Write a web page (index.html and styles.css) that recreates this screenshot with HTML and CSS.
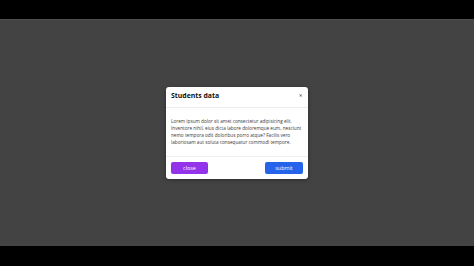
FILE: index.html
```html
<!DOCTYPE html>
<html lang="en">
<head>
<meta charset="utf-8">
<title>Students data</title>
<link rel="stylesheet" href="styles.css">
</head>
<body>
<div class="screen">
  <div class="bar bar-top"></div>
  <main class="stage">
    <section class="modal" role="dialog" aria-labelledby="modal-title">
      <header class="modal-header">
        <h2 id="modal-title" class="modal-title">Students data</h2>
        <button class="modal-x" aria-label="Close">&#x2715;</button>
      </header>
      <div class="modal-body">
        <p>Lorem ipsum dolor sit amet consectetur adipisicing elit. Inventore nihil, eius dicta labore doloremque eum, nesciunt nemo tempora odit doloribus porro atque? Facilis vero laboriosam aut soluta consequatur commodi tempore.</p>
      </div>
      <footer class="modal-footer">
        <button class="btn btn-close">close</button>
        <button class="btn btn-submit">submit</button>
      </footer>
    </section>
  </main>
  <div class="bar bar-bottom"></div>
</div>
</body>
</html>
```

FILE: styles.css
```css
html, body {
  margin: 0;
  padding: 0;
  background: #000;
}

.screen {
  width: 474px;
  height: 266px;
  display: flex;
  flex-direction: column;
  font-family: "Open Sans", "Liberation Sans", sans-serif;
}

.bar-top {
  height: 19px;
  background: #000;
}

.bar-bottom {
  height: 20px;
  background: #000;
}

.stage {
  height: 227px;
  box-sizing: border-box;
  background: #434343;
  border-top: 1px solid #4c4c4c;
  display: flex;
  align-items: center;
  justify-content: center;
}

.modal {
  width: 142px;
  background: #fff;
  border-radius: 3px;
  box-shadow: 0 1px 4px rgba(0, 0, 0, 0.35);
  display: flex;
  flex-direction: column;
}

.modal-header {
  height: 20px;
  padding: 0 6px 0 5px;
  display: flex;
  align-items: center;
  justify-content: space-between;
  border-bottom: 1px solid #ececec;
}

.modal-title {
  margin: 0;
  font-size: 6.9px;
  font-weight: 700;
  color: #111;
  line-height: 1;
}

.modal-x {
  border: 0;
  background: none;
  padding: 0;
  font-size: 3.6px;
  font-weight: 700;
  color: #444;
  line-height: 1;
  cursor: pointer;
}

.modal-body {
  padding: 10px 5px;
  border-bottom: 1px solid #efefef;
}

.modal-body p {
  margin: 0;
  font-size: 4.7px;
  line-height: 7.2px;
  color: #3a3a3a;
}

.modal-footer {
  padding: 5px 5px;
  display: flex;
  justify-content: space-between;
  align-items: center;
}

.btn {
  height: 12px;
  border: 0;
  border-radius: 2px;
  padding: 0;
  color: #fff;
  font-family: "Open Sans", "Liberation Sans", sans-serif;
  font-size: 5.4px;
  line-height: 12px;
  cursor: pointer;
}

.btn-close {
  width: 37px;
  background: #9333ea;
}

.btn-submit {
  width: 38px;
  background: #2563eb;
}
```
